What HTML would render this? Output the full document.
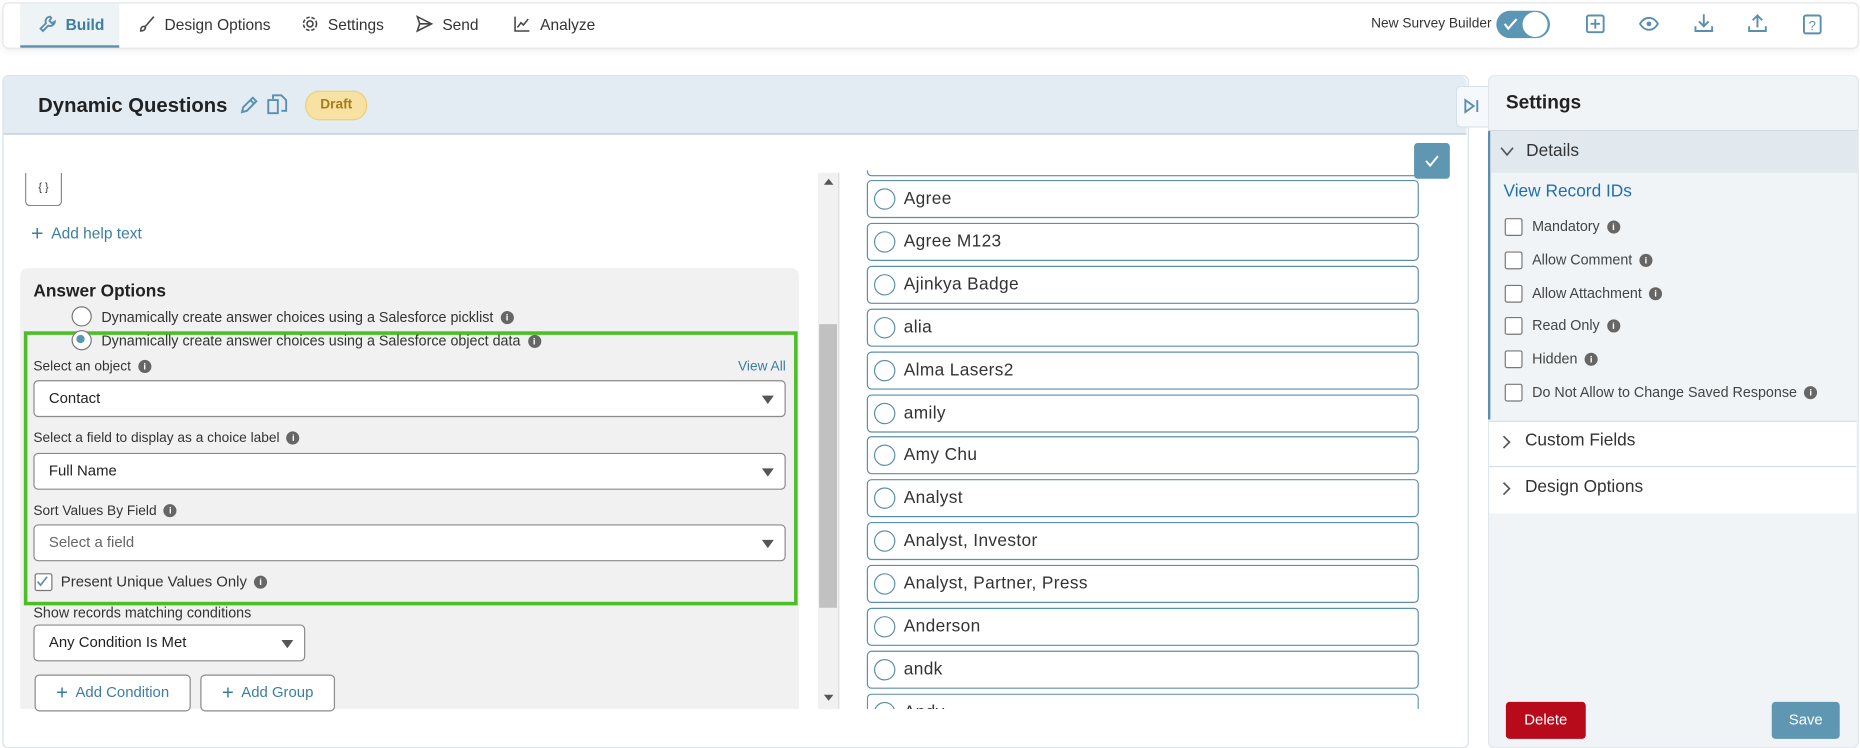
<!DOCTYPE html>
<html><head><meta charset="utf-8"><style>
html,body{margin:0;padding:0;width:1860px;height:746px;overflow:hidden;background:#fff;}
#w{position:absolute;left:0;top:0;width:1560px;height:626px;transform:scale(1.1923,1.1917);transform-origin:0 0;font-family:"Liberation Sans",sans-serif;color:#333;}
.a{position:absolute;}
.tab{position:absolute;top:12px;font-size:13px;color:#333;display:flex;align-items:center;gap:7px;}
.ic{stroke:#5b8fae;fill:none;stroke-width:1.6;}
.sel{position:absolute;left:28px;width:629px;height:29px;border:1px solid #8a8a8a;border-radius:4px;background:#fff;font-size:12.5px;line-height:29px;text-indent:12px;color:#222;}
.sel:after{content:"";position:absolute;right:9px;top:12px;border-left:5px solid transparent;border-right:5px solid transparent;border-top:7px solid #555;}
.lbl{position:absolute;left:28px;font-size:11.5px;color:#333;}
.info{display:inline-block;width:11px;height:11px;border-radius:50%;background:#666;color:#fff;font-size:8px;line-height:11px;text-align:center;font-weight:bold;vertical-align:middle;margin-left:6px;}
.item{position:absolute;left:727px;width:461px;height:30px;border:1px solid #5b8fae;border-radius:4px;background:#fff;font-size:14.5px;line-height:30px;}
.item i{position:absolute;left:5px;top:6px;width:16px;height:16px;border:1px solid #5b8fae;border-radius:50%;}
.item span{position:absolute;left:30px;letter-spacing:.3px;}
.cb{position:absolute;left:1262px;font-size:12px;color:#444;line-height:15px;}
.cb i{display:inline-block;width:13px;height:13px;border:1px solid #777;border-radius:2px;background:#fff;vertical-align:middle;margin-right:8px;}
.btn{position:absolute;height:29px;border:1px solid #8a8a8a;border-radius:4px;background:#fff;font-size:12.5px;line-height:29px;color:#3b7ea1;}
</style></head><body><div id="w">
<div class="a" style="left:2px;top:2px;width:1555px;height:37px;border:1px solid #e3e6ea;border-radius:5px;background:#fff;box-shadow:0 2px 6px rgba(0,0,0,.06)"></div>
<div class="a" style="left:17px;top:3px;width:83px;height:35px;background:#eef3f6;border-bottom:2px solid #5b8fae"></div>
<div class="tab" style="left:32px;color:#3b7ea1;font-weight:bold"><svg width="16" height="16" viewBox="0 0 16 16"><path class="ic" d="M10 2a4 4 0 0 0-3.5 5.5L2 12l2 2 4.5-4.5A4 4 0 0 0 14 6l-2.5 1.5-2-2L11 3z"/></svg>Build</div>
<div class="tab" style="left:115px"><svg width="16" height="16" viewBox="0 0 16 16"><path d="M14 2L7 10M3 14c0-3 1-4 3-4l1 1c0 2-2 3-4 3z" stroke="#444" fill="none" stroke-width="1.3"/></svg>Design Options</div>
<div class="tab" style="left:252px"><svg width="16" height="16" viewBox="0 0 16 16"><circle cx="8" cy="8" r="2.5" stroke="#444" fill="none" stroke-width="1.3"/><circle cx="8" cy="8" r="5.5" stroke="#444" fill="none" stroke-width="1.3" stroke-dasharray="3 1.5"/></svg>Settings</div>
<div class="tab" style="left:348px"><svg width="16" height="16" viewBox="0 0 16 16"><path d="M2 2l12 6-12 6 2-6zM4 8h10" stroke="#444" fill="none" stroke-width="1.3"/></svg>Send</div>
<div class="tab" style="left:430px"><svg width="16" height="16" viewBox="0 0 16 16"><path d="M2 2v12h12M4 11l3-4 2 2 4-5" stroke="#444" fill="none" stroke-width="1.3"/></svg>Analyze</div>
<div class="a" style="left:1150px;top:14px;font-size:11.5px;color:#333">New Survey Builder</div>
<div class="a" style="left:1255px;top:9px;width:45px;height:23px;border-radius:12px;background:#5b97b5"></div>
<div class="a" style="left:1277px;top:10px;width:21px;height:21px;border-radius:50%;background:#fff"></div>
<svg class="a" style="left:1260px;top:13px" width="14" height="14" viewBox="0 0 14 14"><path d="M2 7l3 4 7-8" stroke="#fff" fill="none" stroke-width="1.8"/></svg>
<svg class="a" style="left:1329px;top:11px" width="18" height="18" viewBox="0 0 18 18"><rect class="ic" x="2" y="2" width="14" height="14" rx="1.5"/><path class="ic" d="M9 5v8M5 9h8"/></svg>
<svg class="a" style="left:1374px;top:11px" width="18" height="18" viewBox="0 0 18 18"><path class="ic" stroke-width="2" d="M1.5 9c2-3.5 4.5-5 7.5-5s5.5 1.5 7.5 5c-2 3.5-4.5 5-7.5 5s-5.5-1.5-7.5-5z"/><circle cx="9" cy="9" r="2" fill="#5b8fae"/></svg>
<svg class="a" style="left:1420px;top:10px" width="18" height="18" viewBox="0 0 18 18"><path class="ic" stroke-width="2" d="M9 2v10M5 8l4 4 4-4M2 12v4h14v-4"/></svg>
<svg class="a" style="left:1465px;top:10px" width="18" height="18" viewBox="0 0 18 18"><path class="ic" stroke-width="2" d="M9 13V3M5 7l4-4 4 4M2 12v4h14v-4"/></svg>
<svg class="a" style="left:1511px;top:11px" width="18" height="18" viewBox="0 0 18 18"><rect class="ic" x="2" y="2" width="14" height="15" rx="1.5"/><text x="9" y="14" font-size="11" fill="#5b8fae" text-anchor="middle" font-family="Liberation Sans">?</text></svg>

<div class="a" style="left:2px;top:63px;width:1228px;height:563px;border:1px solid #d5e1e8;border-radius:5px;background:#fff"></div>
<div class="a" style="left:3px;top:64px;width:1227px;height:48px;background:#e3ecf2;border-bottom:1px solid #a9c3d3;border-radius:5px 5px 0 0"></div>
<div class="a" style="left:32px;top:79px;font-size:17px;font-weight:bold;color:#222">Dynamic Questions</div>
<svg class="a" style="left:200px;top:80px" width="17" height="17" viewBox="0 0 17 17"><path class="ic" d="M3 14l1-4 8-8 3 3-8 8zM10 4l3 3"/></svg>
<svg class="a" style="left:223px;top:78px" width="19" height="19" viewBox="0 0 19 19"><path class="ic" d="M6 5V2h7l4 4v9h-4M2 6h8v11H2z"/></svg>
<div class="a" style="left:256px;top:76px;width:50px;height:23px;border:1px solid #eccf77;border-radius:12px;background:#f7e2a4;color:#a87c1a;font-size:11.5px;font-weight:bold;line-height:23px;text-align:center">Draft</div>
<div class="a" style="left:1221px;top:72px;width:26px;height:33px;border:1px solid #d5e1e8;border-right:none;border-radius:4px 0 0 4px;background:#f6f9fb"></div>
<svg class="a" style="left:1227px;top:82px" width="16" height="14" viewBox="0 0 16 14"><path class="ic" d="M2 2l7 5-7 5zM12 2v10"/></svg>

<div class="a" style="left:21px;top:145px;width:29px;height:27px;border:1px solid #888;border-top:none;border-radius:0 0 4px 4px;font-size:9px;text-align:center;line-height:24px">{ }</div>
<div class="a" style="left:26px;top:186px;font-size:13px;color:#3b7ea1"><span style="font-size:18px;vertical-align:-2px">+</span>&nbsp; Add help text</div>
<div class="a" style="left:17px;top:225px;width:653px;height:370px;background:#f1f1f1;border-radius:6px 6px 0 0"></div>
<div class="a" style="left:28px;top:237px;font-size:14.5px;font-weight:bold;color:#222">Answer Options</div>
<div class="a" style="left:60px;top:257px;width:15px;height:15px;border:1px solid #777;border-radius:50%;background:#fff"></div>
<div class="a" style="left:85px;top:259px;font-size:12px">Dynamically create answer choices using a Salesforce picklist<span class="info">i</span></div>
<div class="a" style="left:20px;top:278px;width:643px;height:224px;border:3px solid #4cbf26"></div>
<div class="a" style="left:60px;top:277px;width:15px;height:15px;border:1px solid #777;border-radius:50%;background:#fff"></div>
<div class="a" style="left:64px;top:281px;width:7px;height:7px;border-radius:50%;background:#5b97b5"></div>
<div class="a" style="left:85px;top:279px;font-size:12px">Dynamically create answer choices using a Salesforce object data<span class="info">i</span></div>
<div class="lbl" style="top:302px">Select an object<span class="info">i</span></div>
<div class="a" style="left:619px;top:302px;font-size:11.5px;color:#3b7ea1">View All</div>
<div class="sel" style="top:319px">Contact</div>
<div class="lbl" style="top:362px">Select a field to display as a choice label<span class="info">i</span></div>
<div class="sel" style="top:380px">Full Name</div>
<div class="lbl" style="top:423px">Sort Values By Field<span class="info">i</span></div>
<div class="sel" style="top:440px;color:#666">Select a field</div>
<div class="a" style="left:29px;top:481px;width:13px;height:13px;border:1px solid #777;border-radius:2px;background:#fff"></div>
<svg class="a" style="left:30px;top:482px" width="11" height="11" viewBox="0 0 11 11"><path d="M1.5 6l2.5 3 5.5-7" stroke="#5b8fae" fill="none" stroke-width="1.4"/></svg>
<div class="a" style="left:51px;top:481px;font-size:12.5px">Present Unique Values Only<span class="info">i</span></div>
<div class="lbl" style="top:507px;font-size:12px">Show records matching conditions</div>
<div class="sel" style="top:524px;width:226px">Any Condition Is Met</div>
<div class="btn" style="left:29px;top:566px;width:129px;text-align:center"><span style="font-size:17px;vertical-align:-2px">+</span>&nbsp; Add Condition</div>
<div class="btn" style="left:168px;top:566px;width:111px;text-align:center"><span style="font-size:17px;vertical-align:-2px">+</span>&nbsp; Add Group</div>
<div class="a" style="left:686px;top:145px;width:17px;height:450px;background:#f1f1f1;border-right:1px solid #ddd"></div>
<div class="a" style="left:687px;top:272px;width:15px;height:238px;background:#c1c1c1"></div>
<div class="a" style="left:691px;top:150px;border-left:4px solid transparent;border-right:4px solid transparent;border-bottom:5px solid #555"></div>
<div class="a" style="left:691px;top:583px;border-left:4px solid transparent;border-right:4px solid transparent;border-top:5px solid #555"></div>

<div class="a" style="left:727px;top:143px;width:463px;height:5px;overflow:hidden"><div class="a" style="left:0;top:-27px;width:461px;height:30px;border:1px solid #5b8fae;border-radius:4px"></div></div>
<div class="a" style="left:1186px;top:120px;width:30px;height:30px;background:#5f97b3;border-radius:3px"></div>
<svg class="a" style="left:1193px;top:127px" width="16" height="16" viewBox="0 0 16 16"><path d="M3 8l3.5 4L13 4" stroke="#fff" fill="none" stroke-width="1.6"/></svg>
<div class="item" style="top:151px"><i></i><span>Agree</span></div>
<div class="item" style="top:187px"><i></i><span>Agree M123</span></div>
<div class="item" style="top:223px"><i></i><span>Ajinkya Badge</span></div>
<div class="item" style="top:259px"><i></i><span>alia</span></div>
<div class="item" style="top:295px"><i></i><span>Alma Lasers2</span></div>
<div class="item" style="top:331px"><i></i><span>amily</span></div>
<div class="item" style="top:366px"><i></i><span>Amy Chu</span></div>
<div class="item" style="top:402px"><i></i><span>Analyst</span></div>
<div class="item" style="top:438px"><i></i><span>Analyst, Investor</span></div>
<div class="item" style="top:474px"><i></i><span>Analyst, Partner, Press</span></div>
<div class="item" style="top:510px"><i></i><span>Anderson</span></div>
<div class="item" style="top:546px"><i></i><span>andk</span></div>
<div class="a" style="left:727px;top:582px;width:463px;height:13px;overflow:hidden"><div class="item" style="left:0;top:0"><i></i><span>Andy</span></div></div>

<div class="a" style="left:1248px;top:63px;width:309px;height:563px;background:#f0f4f7;border:1px solid #e0e7ec;border-radius:5px"></div>
<div class="a" style="left:1263px;top:78px;font-size:16px;font-weight:bold;color:#222">Settings</div>
<div class="a" style="left:1248px;top:109px;width:310px;height:1px;background:#cfd9e0"></div>
<div class="a" style="left:1248px;top:110px;width:2px;height:242px;background:#5b8fae"></div>
<div class="a" style="left:1250px;top:110px;width:308px;height:35px;background:#e1e9ef"></div>
<svg class="a" style="left:1257px;top:121px" width="14" height="12" viewBox="0 0 14 12"><path d="M2 3l5 6 5-6" stroke="#555" fill="none" stroke-width="1.4"/></svg>
<div class="a" style="left:1280px;top:119px;font-size:14.5px;color:#333">Details</div>
<div class="a" style="left:1261px;top:153px;font-size:14.5px;color:#1f6fb2">View Record IDs</div>
<div class="cb" style="top:183px"><i></i>Mandatory<span class="info">i</span></div>
<div class="cb" style="top:211px"><i></i>Allow Comment<span class="info">i</span></div>
<div class="cb" style="top:239px"><i></i>Allow Attachment<span class="info">i</span></div>
<div class="cb" style="top:266px"><i></i>Read Only<span class="info">i</span></div>
<div class="cb" style="top:294px"><i></i>Hidden<span class="info">i</span></div>
<div class="cb" style="top:322px"><i></i>Do Not Allow to Change Saved Response<span class="info">i</span></div>
<div class="a" style="left:1249px;top:353px;width:308px;height:77px;background:#fff;border-top:1px solid #d5dde3"></div>
<div class="a" style="left:1249px;top:391px;width:308px;height:1px;background:#d5dde3"></div>
<svg class="a" style="left:1258px;top:364px" width="10" height="14" viewBox="0 0 10 14"><path d="M3 2l5 5-5 5" stroke="#555" fill="none" stroke-width="1.4"/></svg>
<div class="a" style="left:1279px;top:362px;font-size:14.5px">Custom Fields</div>
<svg class="a" style="left:1258px;top:403px" width="10" height="14" viewBox="0 0 10 14"><path d="M3 2l5 5-5 5" stroke="#555" fill="none" stroke-width="1.4"/></svg>
<div class="a" style="left:1279px;top:401px;font-size:14.5px">Design Options</div>
<div class="a" style="left:1263px;top:589px;width:67px;height:31px;background:#b70a1b;border-radius:3px;color:#fff;font-size:12.5px;line-height:31px;text-align:center">Delete</div>
<div class="a" style="left:1486px;top:589px;width:57px;height:31px;background:#5f97b3;border-radius:3px;color:#fff;font-size:12.5px;line-height:31px;text-align:center">Save</div>
</div></body></html>
